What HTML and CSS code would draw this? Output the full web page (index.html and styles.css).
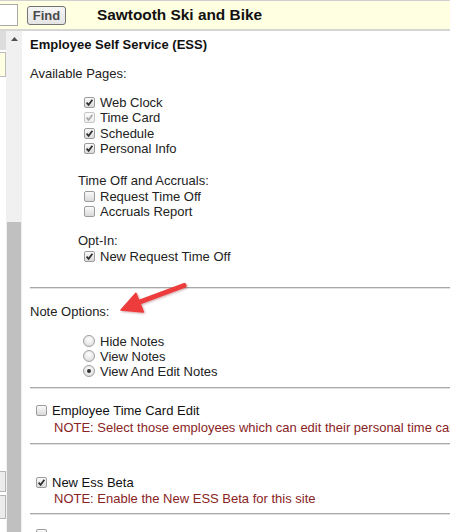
FILE: index.html
```html
<!DOCTYPE html>
<html>
<head>
<meta charset="utf-8">
<link rel="stylesheet" href="styles.css">
</head>
<body>
<div class="topbar">
  <div class="search"></div>
  <div class="find">Find</div>
  <div class="site">Sawtooth Ski and Bike</div>
</div>
<div class="main">
  <div class="side">
    <div class="side-gray"></div>
    <div class="side-yellow"></div>
    <div class="side-spacer"></div>
    <div class="side-box"></div>
    <div class="side-box tall"></div>
  </div>
  <div class="scrollbar">
    <div class="sb-up"><svg width="7" height="4" viewBox="0 0 7 4"><path d="M0 4 L3.5 0 L7 4 Z" fill="#505050"/></svg></div>
    <div class="sb-track"></div>
    <div class="sb-thumb"></div>
  </div>
  <div class="content">
    <div class="title">Employee Self Service (ESS)</div>
    <div class="avail">Available Pages:</div>

    <div class="group first">
      <div class="row"><span class="cb"><svg viewBox="0 0 9 9"><path d="M1.6 4.6 L3.6 6.8 L7.4 1.8" class="tick"/></svg></span>Web Clock</div>
      <div class="row"><span class="cb disabled"><svg viewBox="0 0 9 9"><path d="M1.6 4.6 L3.6 6.8 L7.4 1.8" class="tick"/></svg></span>Time Card</div>
      <div class="row"><span class="cb"><svg viewBox="0 0 9 9"><path d="M1.6 4.6 L3.6 6.8 L7.4 1.8" class="tick"/></svg></span>Schedule</div>
      <div class="row"><span class="cb"><svg viewBox="0 0 9 9"><path d="M1.6 4.6 L3.6 6.8 L7.4 1.8" class="tick"/></svg></span>Personal Info</div>
    </div>

    <div class="group-title timeoff">Time Off and Accruals:</div>
    <div class="group">
      <div class="row"><span class="cb"></span>Request Time Off</div>
      <div class="row"><span class="cb"></span>Accruals Report</div>
    </div>

    <div class="group-title optin">Opt-In:</div>
    <div class="group">
      <div class="row"><span class="cb"><svg viewBox="0 0 9 9"><path d="M1.6 4.6 L3.6 6.8 L7.4 1.8" class="tick"/></svg></span>New Request Time Off</div>
    </div>

    <div class="rule r1"></div>
    <div class="notes-label">Note Options:</div>
    <div class="radios">
      <div class="rrow"><span class="rb"></span>Hide Notes</div>
      <div class="rrow"><span class="rb"></span>View Notes</div>
      <div class="rrow"><span class="rb on"></span>View And Edit Notes</div>
    </div>

    <div class="rule r2"></div>
    <div class="opt tce"><span class="cb"></span>Employee Time Card Edit</div>
    <div class="note n1">NOTE: Select those employees which can edit their personal time card</div>

    <div class="rule r3"></div>
    <div class="opt beta"><span class="cb"><svg viewBox="0 0 9 9"><path d="M1.6 4.6 L3.6 6.8 L7.4 1.8" class="tick"/></svg></span>New Ess Beta</div>
    <div class="note n2">NOTE: Enable the New ESS Beta for this site</div>

    <div class="rule r4"></div>
    <div class="opt last"><span class="cb"></span>&nbsp;</div>
  </div>
</div>
<svg class="arrow" width="450" height="532" viewBox="0 0 450 532">
  <g class="arrow-shape">
    <line x1="184" y1="285.5" x2="137" y2="303" stroke="#ee3c3c" stroke-width="5" stroke-linecap="round"/>
    <polygon points="121,310 135.9,293.3 143.3,311.9" fill="#ee3c3c" stroke="#ee3c3c" stroke-width="1.5" stroke-linejoin="round"/>
  </g>
</svg>
</body>
</html>
```

FILE: styles.css
```css
body {
  margin: 0;
  width: 450px;
  height: 532px;
  overflow: hidden;
  position: relative;
  background: #fff;
  color: #222;
  font-family: "Liberation Sans", Arial, sans-serif;
  font-size: 13px;
}

.topbar {
  height: 28px;
  border-top: 1px solid #cfcfcf;
  border-bottom: 2px solid #d6d6d6;
  background: #ffffe1;
  display: flex;
  align-items: center;
}

.search {
  width: 17px;
  height: 20px;
  background: #fff;
  border: 1px solid #a9a9a9;
  border-left: none;
}

.find {
  margin-left: 9px;
  width: 37px;
  height: 17px;
  border: 1px solid #737373;
  border-radius: 3px;
  background: linear-gradient(#f6f6f6, #e4e4e4);
  color: #4a4a4a;
  font-weight: bold;
  font-size: 13px;
  line-height: 17px;
  text-align: center;
}

.site {
  margin-left: 31px;
  font-weight: bold;
  font-size: 15.4px;
  color: #111;
}

.main {
  display: flex;
  height: 501px;
}

.side {
  width: 6px;
  display: flex;
  flex-direction: column;
}

.side-gray {
  height: 19px;
  background: #dcdcdc;
}

.side-yellow {
  margin-top: 2px;
  height: 23px;
  background: #ffffe1;
  border: 1px solid #bdbdbd;
  border-left: none;
}

.side-spacer {
  height: 394px;
}

.side-box {
  height: 19px;
  background: #ececec;
  border: 1px solid #b5b5b5;
  border-left: none;
}

.side-box.tall {
  margin-top: 3px;
  height: 22px;
}

.scrollbar {
  width: 16px;
  background: #f0f0f0;
  display: flex;
  flex-direction: column;
  border-right: 1px solid #fff;
}

.sb-up {
  height: 15px;
  display: flex;
  align-items: center;
  justify-content: center;
}

.sb-track {
  height: 176px;
}

.sb-thumb {
  flex: 1;
  margin: 0 1px;
  background: #c0c0c0;
}

.content {
  flex: 1;
  padding-left: 7px;
  padding-top: 6px;
  overflow: hidden;
}

.title {
  font-weight: bold;
  line-height: 15px;
  color: #111;
}

.avail {
  margin-top: 14px;
  line-height: 15px;
}

.group {
  padding-left: 54px;
}

.group.first {
  margin-top: 13.25px;
}

.row {
  height: 15.5px;
  display: flex;
  align-items: center;
  white-space: nowrap;
}

.group-title {
  padding-left: 48px;
  height: 15.5px;
  line-height: 15.5px;
}

.group-title.timeoff {
  margin-top: 16.5px;
}

.group-title.optin {
  margin-top: 13.5px;
}

.cb {
  box-sizing: border-box;
  width: 11px;
  height: 11px;
  margin-right: 5px;
  border: 1px solid #9c9c9c;
  border-radius: 2px;
  background: linear-gradient(#fafafa, #dadada);
  display: inline-flex;
  align-items: center;
  justify-content: center;
  flex-shrink: 0;
}

.cb svg {
  width: 9px;
  height: 9px;
  display: block;
}

.tick {
  fill: none;
  stroke: #2e2e2e;
  stroke-width: 1.7;
}

.cb.disabled {
  border-color: #c6c6c6;
  background: linear-gradient(#fcfcfc, #ececec);
}

.cb.disabled .tick {
  stroke: #a8a8a8;
}

.rule {
  height: 0;
  border-top: 1px solid #a9a9a9;
  border-bottom: 1px solid #e2e2e2;
}

.rule.r1 { margin-top: 23px; }
.rule.r2 { margin-top: 8.5px; }
.rule.r3 { margin-top: 8.5px; }
.rule.r4 { margin-top: 7.5px; }

.notes-label {
  margin-top: 15.5px;
  line-height: 15px;
}

.radios {
  margin-top: 14.5px;
  padding-left: 53px;
}

.rrow {
  height: 15px;
  display: flex;
  align-items: center;
  white-space: nowrap;
}

.rb {
  box-sizing: border-box;
  width: 12px;
  height: 12px;
  margin-right: 5px;
  border: 1px solid #9e9e9e;
  border-radius: 50%;
  background: radial-gradient(circle at 50% 35%, #fdfdfd, #d8d8d8);
  display: inline-flex;
  align-items: center;
  justify-content: center;
  flex-shrink: 0;
}

.rb.on::after {
  content: "";
  width: 4px;
  height: 4px;
  border-radius: 50%;
  background: #333;
}

.opt {
  padding-left: 6px;
  height: 15px;
  display: flex;
  align-items: center;
  white-space: nowrap;
  color: #111;
}

.opt.tce { margin-top: 13.5px; }
.opt.beta { margin-top: 29.5px; }
.opt.last { margin-top: 12px; }

.note {
  padding-left: 24px;
  line-height: 15px;
  color: #8a2424;
  white-space: nowrap;
}

.note.n1 { margin-top: 2px; }
.note.n2 { margin-top: 1px; }

.arrow {
  position: absolute;
  left: 0;
  top: 0;
  pointer-events: none;
}

.arrow-shape {
  filter: drop-shadow(1px 1px 1px rgba(120, 0, 0, 0.35));
}
```
